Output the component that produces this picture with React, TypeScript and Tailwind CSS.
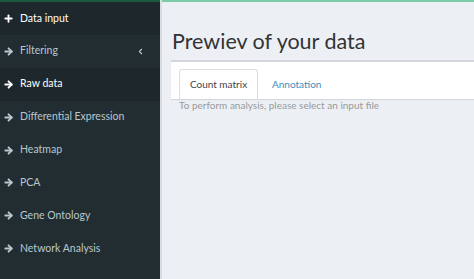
import { ArrowRight, Plus, ChevronLeft } from "lucide-react";

const items = [
  { label: "Data input", icon: "plus", active: true },
  { label: "Filtering", icon: "arrow", chevron: true },
  { label: "Raw data", icon: "arrow", active: true },
  { label: "Differential Expression", icon: "arrow" },
  { label: "Heatmap", icon: "arrow" },
  { label: "PCA", icon: "arrow" },
  { label: "Gene Ontology", icon: "arrow" },
  { label: "Network Analysis", icon: "arrow" },
];

function Sidebar() {
  return (
    <aside className="w-[160px] shrink-0 bg-[#222d32] flex flex-col">
      <div className="h-[2px] bg-[#1b5a40]" />
      <ul className="flex flex-col">
        {items.map((it) => (
          <li
            key={it.label}
            className={`h-[32.9px] flex items-center pl-[3px] pr-3 text-[10.5px] ${
              it.active ? "bg-[#1e282c] text-white" : "text-[#b8c7ce]"
            }`}
          >
            <span className="w-[17px] flex items-center">
              {it.icon === "plus" ? (
                <Plus size={11} strokeWidth={4} />
              ) : (
                <ArrowRight size={11} strokeWidth={4} />
              )}
            </span>
            <span className="flex-1">{it.label}</span>
            {it.chevron && <ChevronLeft size={9} strokeWidth={3} className="mr-[3px]" />}
          </li>
        ))}
      </ul>
    </aside>
  );
}

export default function App() {
  return (
    <div
      className="w-[474px] h-[279px] flex overflow-hidden bg-[#ecf0f5]"
      style={{ fontFamily: "Lato, 'Open Sans', sans-serif" }}
    >
      <Sidebar />
      <main className="flex-1 flex flex-col border-l-2 border-[#d9dde3]">
        <div className="h-[2px] bg-[#7ccba8]" />
        <h1 className="mt-[26px] ml-[10px] text-[21.5px] leading-[26px] text-[#333]">
          Prewiev of your data
        </h1>
        <section className="mt-[6px] ml-[9px] bg-white border-t-2 border-[#d2d6de] h-[39px] flex items-end pl-[8px] shadow-[0_1px_1px_rgba(0,0,0,0.1)]">
          <div className="h-[30px] w-[79px] flex items-center justify-center border border-b-0 border-[#ddd] rounded-t-[3px] text-[10px] text-[#444]">
            Count matrix
          </div>
          <div className="h-[30px] px-[14px] flex items-center text-[10px] text-[#3c8dbc]">
            Annotation
          </div>
        </section>
        <p className="ml-[17px] -mt-[1px] text-[10px] leading-[14px] text-[#999]">
          To perform analysis, please select an input file
        </p>
      </main>
    </div>
  );
}
